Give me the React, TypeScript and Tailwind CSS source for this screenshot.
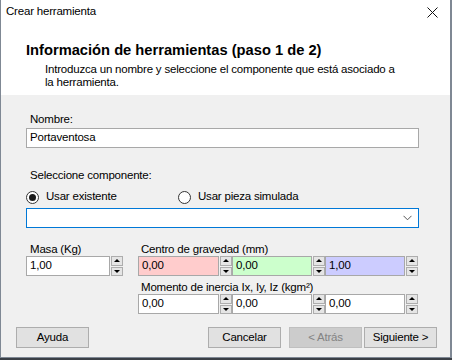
import React from 'react';

const font = { fontFamily: '"Liberation Sans", Arial, sans-serif' };

function Spinner() {
  return (
    <div className="flex h-full w-[13px] flex-col gap-[1px] pl-[1px]">
      <div className="flex flex-1 items-center justify-center border border-[#adadad] bg-[#e5e5e5]">
        <div className="h-0 w-0 border-x-[3px] border-b-[3px] border-x-transparent border-b-black" />
      </div>
      <div className="flex flex-1 items-center justify-center border border-[#adadad] bg-[#e5e5e5]">
        <div className="h-0 w-0 border-x-[3px] border-t-[3px] border-x-transparent border-t-black" />
      </div>
    </div>
  );
}

function NumField({ value, bg = 'bg-white', width }: { value: string; bg?: string; width: string }) {
  return (
    <div className="flex h-[20px]">
      <div className={`flex h-full items-center border border-[#a8a8a8] pl-[3px] text-black ${bg} ${width}`}>
        {value}
      </div>
      <Spinner />
    </div>
  );
}

function Radio({ checked, label }: { checked?: boolean; label: string }) {
  return (
    <div className="flex items-center gap-[7px]">
      <div className="flex h-[13px] w-[13px] items-center justify-center rounded-full border border-[#333] bg-white">
        {checked && <div className="h-[7px] w-[7px] rounded-full bg-[#1a1a1a]" />}
      </div>
      <span className="text-black">{label}</span>
    </div>
  );
}

function Btn({ label, disabled }: { label: string; disabled?: boolean }) {
  return (
    <div
      className={`flex h-[21px] w-[73px] items-center justify-center border ${
        disabled ? 'border-[#bfbfbf] bg-[#cccccc] text-[#838383]' : 'border-[#adadad] bg-[#e1e1e1] text-black'
      }`}
    >
      {label}
    </div>
  );
}

export default function App() {
  return (
    <div
      className="h-[360px] w-[452px] overflow-hidden bg-[#3a3f46] text-[11.5px] tracking-[-0.2px]"
      style={font}
    >
      <div className="flex h-[358px] w-[452px] flex-col border-b border-l border-r-2 border-[#7f8894] bg-[#f0f0f0]">
        {/* Title + header */}
        <div className="h-[95px] bg-white">
          <div className="flex h-[24px] items-center justify-between pl-[5px] pr-[8px]">
            <span className="text-black">Crear herramienta</span>
            <svg width="11" height="11" viewBox="0 0 11 11" className="mr-[4px]">
              <path d="M0.5 0.5 L10.5 10.5 M10.5 0.5 L0.5 10.5" stroke="#111" strokeWidth="1" />
            </svg>
          </div>
          <div className="mt-[16px] pl-[25px] text-[14.7px] font-bold leading-[20px] tracking-normal text-black">
            Información de herramientas (paso 1 de 2)
          </div>
          <div className="mt-[3px] pl-[44px] leading-[13px] text-black">
            Introduzca un nombre y seleccione el componente que está asociado a
            <br />
            la herramienta.
          </div>
        </div>

        {/* Body */}
        <div className="flex flex-1 flex-col px-[25px] pt-[17px]">
          <div className="pl-[4px] leading-[14px] text-black">Nombre:</div>
          <div className="mt-[2px] flex h-[20px] w-[393px] items-center border border-[#a8a8a8] bg-white pl-[3px] text-black">
            Portaventosa
          </div>

          <div className="mt-[20px] pl-[4px] leading-[14px] text-black">Seleccione componente:</div>
          <div className="mt-[8px] flex h-[14px] items-center">
            <div className="w-[152px]">
              <Radio checked label="Usar existente" />
            </div>
            <Radio label="Usar pieza simulada" />
          </div>
          <div className="mt-[4px] flex h-[20px] w-[393px] items-center justify-end border border-[#0078d7] bg-white pr-[6px]">
            <svg width="9" height="6" viewBox="0 0 9 6">
              <path d="M0.5 0.8 L4.5 4.8 L8.5 0.8" stroke="#555" strokeWidth="1" fill="none" />
            </svg>
          </div>

          <div className="mt-[14px] flex">
            <div className="w-[112px]">
              <div className="pl-[4px] leading-[14px] text-black">Masa (Kg)</div>
              <NumField value="1,00" width="w-[84px]" />
            </div>
            <div>
              <div className="pl-[3px] leading-[14px] text-black">Centro de gravedad (mm)</div>
              <div className="flex">
                <NumField value="0,00" bg="bg-[#ffcccc]" width="w-[81px]" />
                <NumField value="0,00" bg="bg-[#ccffcc]" width="w-[80px]" />
                <NumField value="1,00" bg="bg-[#ccccff]" width="w-[80px]" />
              </div>
              <div className="mt-[4px] pl-[3px] leading-[14px] text-black">
                Momento de inercia Ix, Iy, Iz (kgm²)
              </div>
              <div className="flex">
                <NumField value="0,00" width="w-[81px]" />
                <NumField value="0,00" width="w-[80px]" />
                <NumField value="0,00" width="w-[80px]" />
              </div>
            </div>
          </div>

          <div className="mt-[13px] flex items-center">
            <div className="-ml-[10px]">
              <Btn label="Ayuda" />
            </div>
            <div className="ml-auto flex gap-[2px]">
              <div className="mr-[6px]">
                <Btn label="Cancelar" />
              </div>
              <Btn label="< Atrás" disabled />
              <div className="-mr-[12px]">
                <Btn label="Siguiente >" />
              </div>
            </div>
          </div>
        </div>
      </div>
    </div>
  );
}
